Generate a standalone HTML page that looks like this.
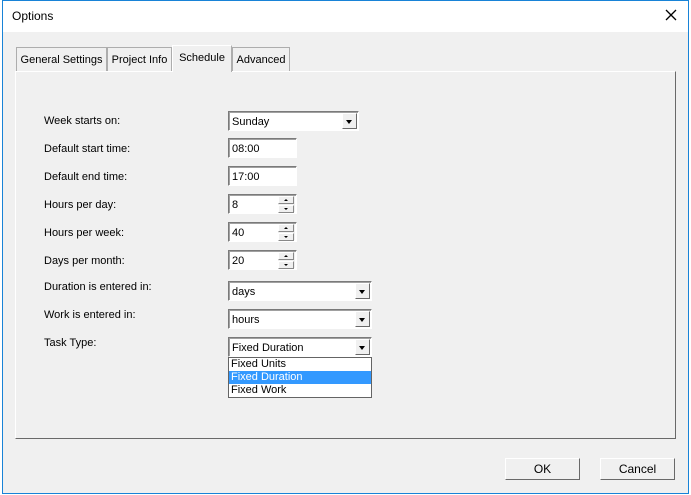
<!DOCTYPE html>
<html><head><style>
body{margin:0;width:691px;height:495px;background:#fff;position:relative;overflow:hidden;font-family:"Liberation Sans",sans-serif;font-size:11px;color:#000}
.a{position:absolute}
.win{left:2px;top:0;width:685px;height:492px;border:1px solid #1883d7;background:#f0f0f0}
.title{left:3px;top:1px;width:685px;height:31px;background:#fff}
.lbl{position:absolute;left:44px}
.box{position:absolute;background:#fff;border:1px solid;border-color:#7a7a7a #fff #fff #7a7a7a;box-shadow:inset 1px 1px 0 #a0a0a0;box-sizing:border-box;padding:4px 3px 0;font-size:11px;line-height:13px;white-space:nowrap}
.arr{position:absolute;right:1px;top:1px;width:15px;bottom:1px;background:#f0f0f0;border:1px solid;border-color:#fff #696969 #696969 #fff;box-sizing:border-box}
.arr:after{content:"";position:absolute;left:3px;top:6px;border:3px solid transparent;border-top:4px solid #000;border-bottom:0}
.spin{position:absolute;right:1px;top:1px;width:17px;bottom:1px;background:#f0f0f0}
.spin i{position:absolute;left:0;width:16px;height:8px;border:1px solid;border-color:#fff #888 #888 #fff;box-sizing:border-box}
.spin i.u:after{content:"";position:absolute;left:5px;top:2px;border:2px solid transparent;border-bottom:2px solid #000;border-top:0}
.spin i.d:after{content:"";position:absolute;left:5px;top:2px;border:2px solid transparent;border-top:2px solid #000;border-bottom:0}
.tab{position:absolute;top:47px;height:24px;border:1px solid #adadad;border-bottom:none;background:#f0f0f0;box-sizing:border-box;padding:6px 0 0;text-align:center;font-size:11px;white-space:nowrap}
.btn{position:absolute;top:458px;width:75px;height:22px;border:1px solid;border-color:#fff #696969 #696969 #fff;box-sizing:border-box;text-align:center;line-height:20px;font-size:12px}
</style></head><body>
<div class="a win"></div>
<div class="a title"></div>
<div class="a" style="left:12px;top:9px;font-size:12px">Options</div>
<svg class="a" style="left:665px;top:9px" width="12" height="12"><path d="M1 1L11 11M11 1L1 11" stroke="#000" stroke-width="1.3"/></svg>
<div class="a" style="left:15px;top:71px;width:659px;height:366px;border:1px solid;border-color:#fff #696969 #696969 #fff;background:#f0f0f0"></div>
<div class="tab" style="left:16px;width:91px">General Settings</div>
<div class="tab" style="left:107px;width:65px">Project Info</div>
<div class="tab" style="left:172px;top:45px;height:27px;width:60px;border-color:#fff #adadad #f0f0f0 #fff;padding-top:6px">Schedule</div>
<div class="tab" style="left:232px;width:58px">Advanced</div>

<div class="lbl" style="top:115px">Week starts on:</div>
<div class="lbl" style="top:143px">Default start time:</div>
<div class="lbl" style="top:171px">Default end time:</div>
<div class="lbl" style="top:199px">Hours per day:</div>
<div class="lbl" style="top:227px">Hours per week:</div>
<div class="lbl" style="top:255px">Days per month:</div>
<div class="lbl" style="top:281px">Duration is entered in:</div>
<div class="lbl" style="top:309px">Work is entered in:</div>
<div class="lbl" style="top:337px">Task Type:</div>

<div class="box" style="left:228px;top:111px;width:131px;height:20px">Sunday<span class="arr"></span></div>
<div class="box" style="left:228px;top:138px;width:69px;height:20px">08:00</div>
<div class="box" style="left:228px;top:166px;width:69px;height:20px">17:00</div>
<div class="box" style="left:228px;top:194px;width:69px;height:20px">8<span class="spin"><i class="u" style="top:0"></i><i class="d" style="top:9px"></i></span></div>
<div class="box" style="left:228px;top:222px;width:69px;height:20px">40<span class="spin"><i class="u" style="top:0"></i><i class="d" style="top:9px"></i></span></div>
<div class="box" style="left:228px;top:250px;width:69px;height:20px">20<span class="spin"><i class="u" style="top:0"></i><i class="d" style="top:9px"></i></span></div>
<div class="box" style="left:228px;top:281px;width:144px;height:20px">days<span class="arr"></span></div>
<div class="box" style="left:228px;top:309px;width:144px;height:20px">hours<span class="arr"></span></div>
<div class="box" style="left:228px;top:337px;width:144px;height:20px">Fixed Duration<span class="arr"></span></div>
<div class="a" style="left:228px;top:357px;width:142px;height:39px;border:1px solid #646464;background:#fff;line-height:13px">
<div style="padding-left:2px">Fixed Units</div>
<div style="padding-left:2px;background:#3399ff;color:#fff">Fixed Duration</div>
<div style="padding-left:2px">Fixed Work</div>
</div>
<div class="btn" style="left:505px">OK</div>
<div class="btn" style="left:600px">Cancel</div>
</body></html>
